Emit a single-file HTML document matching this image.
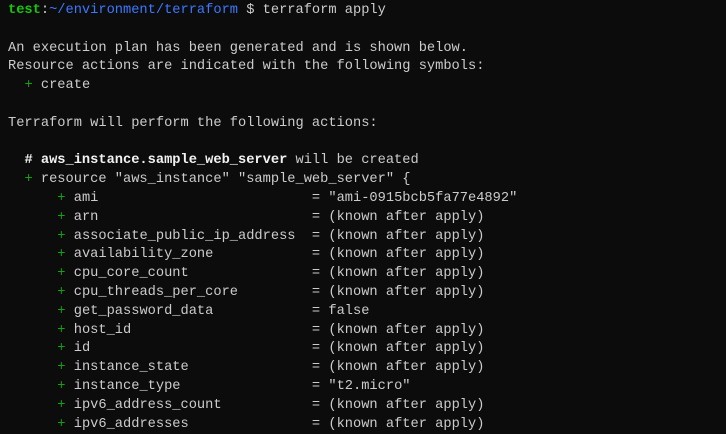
<!DOCTYPE html>
<html><head><meta charset="utf-8"><style>
html,body{margin:0;padding:0;background:#0c0c0c;width:726px;height:434px;overflow:hidden}
pre{margin:0;padding:2px 0 0 8px;font-family:"Liberation Mono",monospace;font-size:13.7px;line-height:18.8px;color:#cccccc;white-space:pre}
.g{color:#16c60c;font-weight:bold}.b{color:#3b78ff}.p{color:#13a10e}.w{color:#f2f2f2;font-weight:bold}
</style></head><body><pre><span class="g">test</span>:<span class="b">~/environment/terraform</span> $ terraform apply

An execution plan has been generated and is shown below.
Resource actions are indicated with the following symbols:
  <span class="p">+</span> create

Terraform will perform the following actions:

  <span class="w"># aws_instance.sample_web_server</span> will be created
  <span class="p">+</span> resource "aws_instance" "sample_web_server" {
      <span class="p">+</span> ami                          = "ami-0915bcb5fa77e4892"
      <span class="p">+</span> arn                          = (known after apply)
      <span class="p">+</span> associate_public_ip_address  = (known after apply)
      <span class="p">+</span> availability_zone            = (known after apply)
      <span class="p">+</span> cpu_core_count               = (known after apply)
      <span class="p">+</span> cpu_threads_per_core         = (known after apply)
      <span class="p">+</span> get_password_data            = false
      <span class="p">+</span> host_id                      = (known after apply)
      <span class="p">+</span> id                           = (known after apply)
      <span class="p">+</span> instance_state               = (known after apply)
      <span class="p">+</span> instance_type                = "t2.micro"
      <span class="p">+</span> ipv6_address_count           = (known after apply)
      <span class="p">+</span> ipv6_addresses               = (known after apply)
</pre></body></html>
